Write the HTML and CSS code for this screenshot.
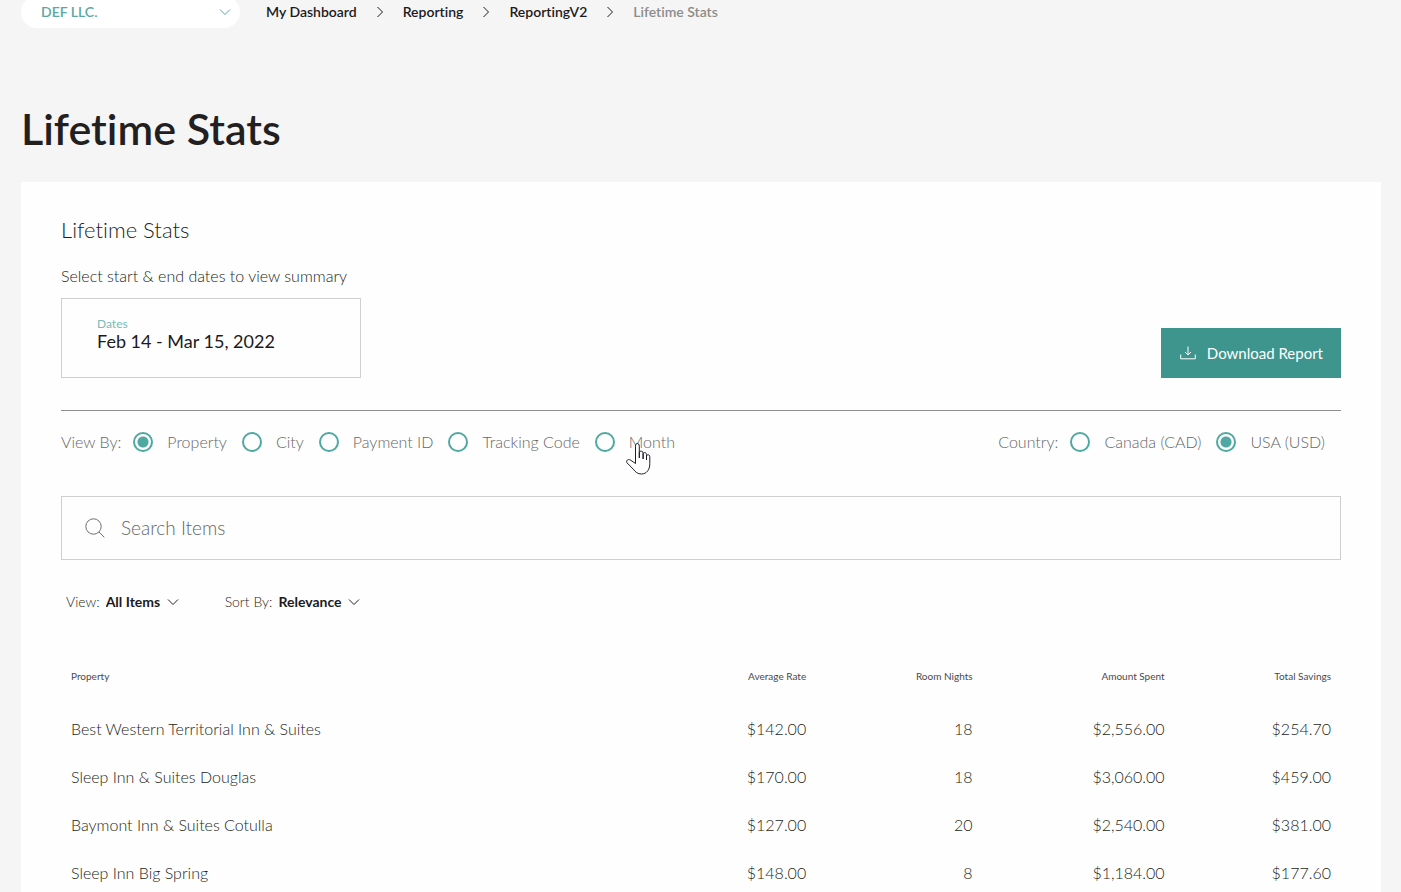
FILE: index.html
```
<!DOCTYPE html>
<html lang="en">
<head>
<meta charset="UTF-8" />
<meta name="viewport" content="width=device-width, initial-scale=1" />
<title>Lifetime Stats</title>
<link rel="stylesheet" href="styles.css">
</head>
<body>

<!-- Top bar -->
<header class="topbar">
  <div class="selectBox company">
    <select aria-label="Company">
      <option>DEF LLC.</option>
    </select>
    <svg class="chevron" width="12" height="8" viewBox="0 0 12 8"><path d="M1 1.5 6 6.5 11 1.5" /></svg>
  </div>
  <nav class="breadcrumbs" aria-label="Breadcrumb">
    <a href="#">My Dashboard</a>
    <svg width="8" height="12" viewBox="0 0 8 12"><path d="M1.5 1 6.5 6 1.5 11" /></svg>
    <a href="#">Reporting</a>
    <svg width="8" height="12" viewBox="0 0 8 12"><path d="M1.5 1 6.5 6 1.5 11" /></svg>
    <a href="#">ReportingV2</a>
    <svg width="8" height="12" viewBox="0 0 8 12"><path d="M1.5 1 6.5 6 1.5 11" /></svg>
    <span class="current">Lifetime Stats</span>
  </nav>
</header>

<h1>Lifetime Stats</h1>

<main class="card">
  <h2>Lifetime Stats</h2>

  <!-- Date range + download -->
  <div class="dateRow">
    <div>
      <p class="hint">Select start &amp; end dates to view summary</p>
      <div class="dateBox">
        <label for="dates">Dates</label>
        <input id="dates" type="text" value="Feb 14 - Mar 15, 2022" readonly />
      </div>
    </div>
    <button class="downloadBtn" type="button">
      <svg width="16" height="14" viewBox="0 0 16 14"><path d="M.7 8.5v4.3h14.6V8.5M8 .5v8M5 6l3 3 3-3" /></svg>
      Download Report
    </button>
  </div>

  <!-- Filters -->
  <div class="filters">
    <div class="radioGroup" role="radiogroup" aria-labelledby="viewByLabel">
      <span id="viewByLabel" class="groupLabel">View By:</span>
      <label><input type="radio" name="viewBy" checked />Property</label>
      <label><input type="radio" name="viewBy" />City</label>
      <label><input type="radio" name="viewBy" />Payment ID</label>
      <label><input type="radio" name="viewBy" />Tracking Code</label>
      <label class="hovered"><input type="radio" name="viewBy" />Month
        <svg class="pointer" width="26" height="34" viewBox="0 0 26 34"><path d="M10.5 20V4.2C10.5.6 14.3.6 14.3 4.2V16v-5.3c0-2.2 3.8-2.2 3.8.4V17v-5.2c.4-1.8 3.4-1.6 3.4.6V18v-4.2c.5-1.7 3.3-1.3 3.3.8v7.2c0 6-3.3 10.2-8.3 10.2-4.2 0-6.2-2.2-8.2-4.8L2 20.8c-1.3-2.2 1-4 3.2-2.9l5.3 3.6z" /></svg>
      </label>
    </div>
    <div class="radioGroup country" role="radiogroup" aria-labelledby="countryLabel">
      <span id="countryLabel" class="groupLabel">Country:</span>
      <label><input type="radio" name="country" />Canada (CAD)</label>
      <label><input type="radio" name="country" checked />USA (USD)</label>
    </div>
  </div>

  <div class="searchBox">
    <svg width="20" height="20" viewBox="0 0 20 20"><circle cx="8.5" cy="8.5" r="7.7" /><path d="M14 14 19.3 19.3" /></svg>
    <input type="search" placeholder="Search Items" aria-label="Search Items" />
  </div>

  <div class="sorting">
    <div class="sortItem">
      <label for="view">View:</label>
      <div class="selectBox">
        <select id="view">
          <option>All Items</option>
        </select>
        <svg class="chevron" width="12" height="8" viewBox="0 0 12 8"><path d="M1 1.5 6 6.5 11 1.5" /></svg>
      </div>
    </div>
    <div class="sortItem">
      <label for="sortBy">Sort By:</label>
      <div class="selectBox">
        <select id="sortBy">
          <option>Relevance</option>
        </select>
        <svg class="chevron" width="12" height="8" viewBox="0 0 12 8"><path d="M1 1.5 6 6.5 11 1.5" /></svg>
      </div>
    </div>
  </div>

  <!-- Stats table -->
  <table>
    <thead>
      <tr>
        <th>Property</th>
        <th>Average Rate</th>
        <th>Room Nights</th>
        <th class="spent">Amount Spent</th>
        <th>Total Savings</th>
      </tr>
    </thead>
    <tbody>
      <tr><td>Best Western Territorial Inn &amp; Suites</td><td>$142.00</td><td>18</td><td>$2,556.00</td><td>$254.70</td></tr>
      <tr><td>Sleep Inn &amp; Suites Douglas</td><td>$170.00</td><td>18</td><td>$3,060.00</td><td>$459.00</td></tr>
      <tr><td>Baymont Inn &amp; Suites Cotulla</td><td>$127.00</td><td>20</td><td>$2,540.00</td><td>$381.00</td></tr>
      <tr><td>Sleep Inn Big Spring</td><td>$148.00</td><td>8</td><td>$1,184.00</td><td>$177.60</td></tr>
    </tbody>
  </table>
</main>

</body>
</html>
```
FILE: styles.css
```
* {
  box-sizing: border-box;
}
body {
  font-family: Lato, "Liberation Sans", sans-serif;
  font-size: 16px;
  font-weight: 300;
  font-variant-ligatures: none;
  margin: 0; padding: 0 20px 0 21px;
  background: #f5f5f5;
  color: #231f20;
}
svg {
  fill: none;
  stroke: currentColor;
  flex: none;
}
input, select, button {
  font: inherit;
  color: inherit;
  border: none;
  background: none;
  padding: 0;
  margin: 0;
}

/* Top bar */
.topbar {
  display: flex;
  align-items: center;
  gap: 26px;
  height: 32px;
  margin-top: -4px;
  font-size: 14px;
  font-weight: 600;
}
.breadcrumbs {
  display: flex;
  align-items: center;
  gap: 19px;
  padding-bottom: 1px;
  color: #1c1a1d;
}
.breadcrumbs a {
  color: inherit;
  text-decoration: none;
}
.breadcrumbs .current {
  color: #8c8c8a;
}

/* Selects, arrow sits over the right padding */
.selectBox {
  display: grid;
  align-items: center;
}
.selectBox select, .selectBox .chevron {
  grid-area: 1 / 1;
}
.selectBox select {
  appearance: none;
  padding-right: 18px;
  cursor: pointer;
}
.chevron {
  justify-self: end;
  pointer-events: none;
}
.company {
  width: 219px;
  height: 32px;
  background: white;
  border-radius: 16px;
  color: #5aa9a3;
}
.company select {
  height: 32px;
  padding: 0 30px 2px 20px;
}
.company .chevron {
  margin-right: 9px;
}

h1 {
  margin: 73px 0 25px;
  font-size: 43px;
  line-height: 56px;
  font-weight: 600;
  color: #231f20;
}

/* Card */
.card {
  background: #fefefe;
  padding: 35px 40px 0;
}
h2 {
  margin: 0 0 22px;
  font-size: 22px;
  line-height: 26px;
  font-weight: 300;
}
.dateRow {
  display: flex;
  justify-content: space-between;
  align-items: flex-end;
  padding-bottom: 32px;
  border-bottom: 1px solid #8e8e8e;
}
.hint {
  margin: 0 0 11px;
  line-height: 22px;
}
.dateBox {
  display: flex;
  flex-direction: column;
  width: 300px;
  height: 80px;
  padding: 18px 35px 0;
  border: 1px solid #cfcfcf;
}
.dateBox label {
  font-size: 12px;
  font-weight: 400;
  line-height: 14px;
  color: #76bcb8;
}
.dateBox input {
  width: 100%;
  font-size: 18px;
  font-weight: 400;
  line-height: 20px;
  height: 20px;
  color: #1c1a1d;
}
.downloadBtn {
  display: flex;
  align-items: center;
  gap: 11px;
  height: 50px;
  padding: 0 18px 0 19px;
  background: #3e958d;
  color: white;
  font-size: 15px;
  font-weight: 400;
  cursor: pointer;
}
.downloadBtn:hover {
  background: #347f78;
}

/* Filters */
.filters {
  display: flex;
  justify-content: space-between;
  flex-wrap: wrap;
  padding: 20px 0 43px;
  color: #666666;
}
.radioGroup {
  display: flex;
  align-items: center;
  gap: 15px;
  line-height: 22px;
}
.radioGroup .groupLabel {
  margin-right: -3px;
}
.radioGroup label {
  display: flex;
  align-items: center;
  gap: 14px;
  cursor: pointer;
}
.radioGroup input {
  appearance: none;
  width: 20px;
  height: 20px;
  border: 2px solid #4fa8a1;
  border-radius: 50%;
}
.radioGroup input:checked {
  background: radial-gradient(circle, #4fa8a1 5px, transparent 6px);
}
.country {
  padding-right: 16px;
}
.hovered {
  position: relative;
}
.hovered .pointer {
  position: absolute;
  left: 30px;
  top: 11px;
  color: #1f1d2b;
  fill: white;
}

/* Search */
.searchBox {
  display: flex;
  align-items: center;
  gap: 16px;
  height: 64px;
  padding: 0 23px;
  border: 1px solid #cfcfcf;
  color: #6d6d6d;
}
.searchBox input {
  flex: 1;
  padding-bottom: 2px;
  font-size: 19px;
  outline: none;
}
.searchBox input::placeholder {
  color: #666666;
}

.sorting {
  display: flex;
  gap: 46px;
  padding: 32px 5px 0;
  font-size: 14px;
  line-height: 20px;
}
.sortItem {
  display: flex;
  align-items: center;
  gap: 6px;
}
.sortItem select {
  font-weight: 700;
  color: #1c1a1d;
}

/* Table */
table {
  width: 100%;
  margin-top: 43px;
  border-collapse: collapse;
  table-layout: fixed;
}
th, td {
  padding: 0 10px;
  text-align: right;
}
th {
  width: 13%;
  height: 49px;
  padding-bottom: 8px;
  font-size: 10px;
  font-weight: 400;
  color: #4a4a4a;
}
th.spent {
  width: 15%;
}
th:first-child {
  width: 46%;
}
th:first-child, td:first-child {
  text-align: left;
}
td {
  height: 48px;
}
```
